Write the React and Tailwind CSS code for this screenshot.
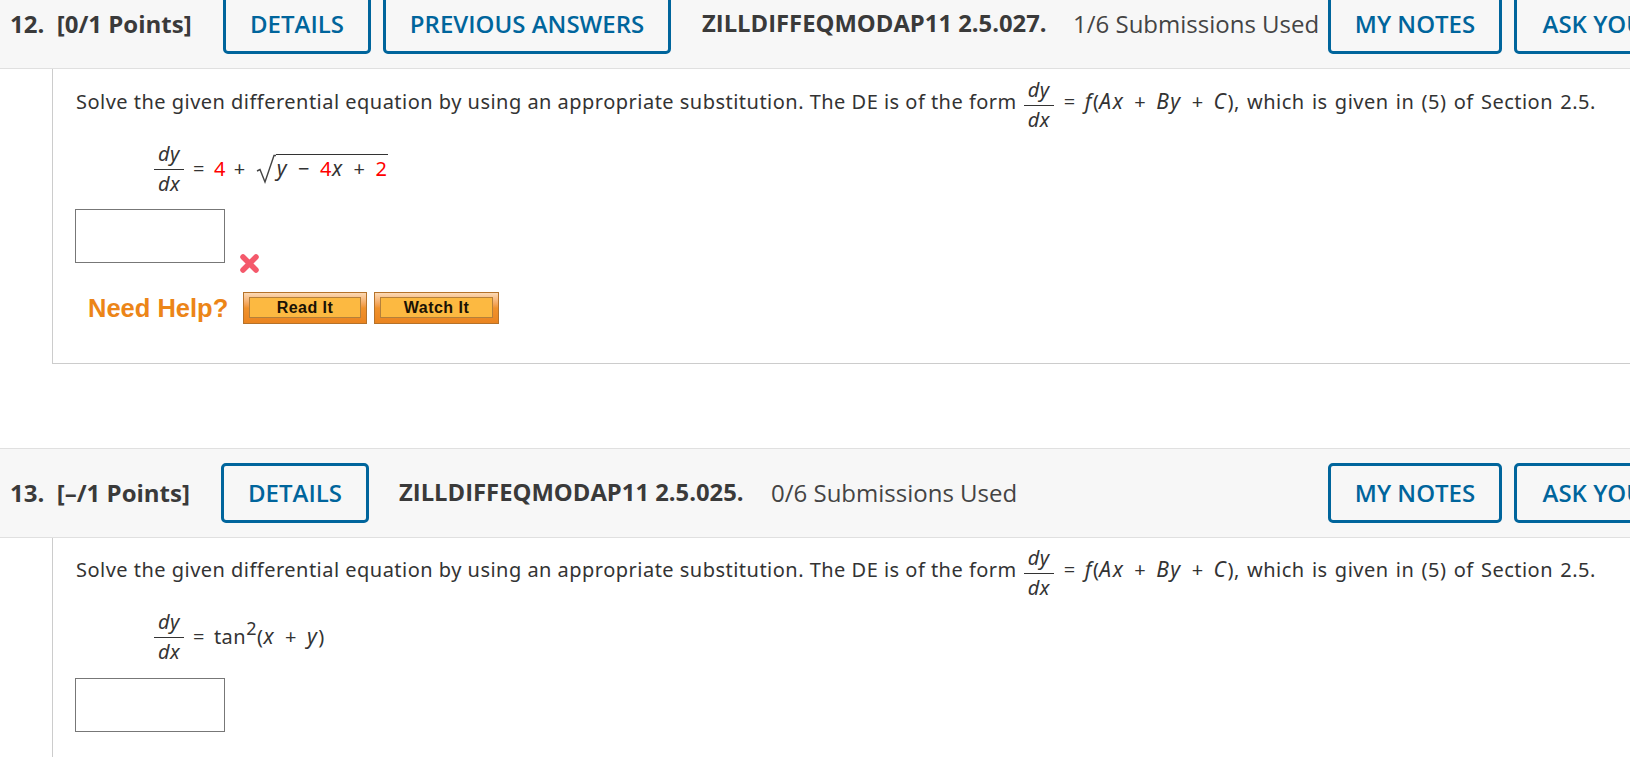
import React from 'react';

const Frac = () => (
    <span className="inline-flex flex-col items-center align-middle italic leading-[28px] w-[30px] shrink-0">
        <span className="w-full text-center border-b border-[#333] pb-[1px]">dy</span>
        <span className="w-full text-center">dx</span>
    </span>
);

const Op = ({ children }) => <span className="mx-[10px]">{children}</span>;

const V = ({ children }) => <i className="text-[21px] tracking-[1.5px]">{children}</i>;

const HeaderButton = ({ label, className }) => (
    <button className={`h-[60px] border-[3px] border-[#00659c] rounded-[5px] text-[#00659c] text-[24px] font-semibold shrink-0 ${className}`}>
        {label}
    </button>
);

const Prompt = () => (
    <div className="flex items-center h-[60px] whitespace-nowrap">
        <span>Solve the given differential equation by using an appropriate substitution. The DE is of the form</span>
        <span className="ml-[7px] mr-[10px] mt-[5px] flex"><Frac /></span>
        <span className="[word-spacing:1.6px]">
            =<span className="ml-[9px]"><V>f</V></span>(<V>Ax</V><Op>+</Op><V>By</V><Op>+</Op><V>C</V>), which is given in (5) of Section 2.5.
        </span>
    </div>
);

const HelpButton = ({ label, className }) => (
    <button className={`h-[32px] border border-[#b5722a] bg-gradient-to-b from-[#fbd9b4] via-[#f0922c] to-[#ea8420] px-[5px] pt-[4px] pb-[5px] flex ${className}`}>
        <span className="flex-1 h-full flex items-center justify-center pt-[1px] bg-[#fcb941] border border-[#b5803a] text-[16px] font-bold text-[#1a1205] font-['Liberation_Sans',Arial,sans-serif]">{label}</span>
    </button>
);

const App = () => (
    <div className="w-[1630px] h-[757px] overflow-hidden bg-white text-[#333] font-['Noto_Sans',sans-serif]">
        {/* Question 12 */}
        <div className="-mt-[22px] h-[91px] bg-[#f7f7f7] border-b border-[#e0e0e0] flex items-center pt-[2px] whitespace-nowrap font-['Open_Sans',sans-serif] text-[24px] overflow-hidden">
            <span className="ml-[10px] w-[213px] shrink-0 font-bold text-[#3a3a3a] text-[24px]">12.&nbsp; [0/1 Points]</span>
            <HeaderButton label="DETAILS" className="w-[148px]" />
            <HeaderButton label="PREVIOUS ANSWERS" className="w-[288px] ml-[12px]" />
            <span className="ml-[31px] w-[371px] shrink-0 font-bold text-[#3a3a3a] text-[23.8px]">ZILLDIFFEQMODAP11 2.5.027.</span>
            <span className="w-[255px] shrink-0 text-[#444]">1/6 Submissions Used</span>
            <HeaderButton label="MY NOTES" className="w-[174px]" />
            <HeaderButton label="ASK YOUR TEACHER" className="w-[285px] ml-[12px] shrink-0" />
        </div>
        <div className="ml-[52px] h-[295px] border-l border-b border-[#ccc] pl-[23px] pt-[3px] text-[20px] tracking-[0.48px]">
            <Prompt />
            <div className="flex items-center h-[60px] ml-[78px] mt-[7px] whitespace-nowrap">
                <Frac />
                <span className="ml-[9px]">=</span>
                <span className="ml-[9px] text-[#f00]">4</span>
                <span className="ml-[8px]">+</span>
                <svg className="ml-[10px]" width="20" height="30" viewBox="0 0 20 30">
                    <path d="M1 17 L4 15.5 L9 28 L18 1.5 L20 1.5" fill="none" stroke="#444" strokeWidth="1.4" />
                </svg>
                <span className="border-t border-[#333] leading-[27px] mb-[1px] -mt-[2px] pl-[1px] pr-[1px]">
                    <V>y</V><Op>−</Op><span className="text-[#f00]">4</span><V>x</V><Op>+</Op><span className="text-[#f00]">2</span>
                </span>
            </div>
            <div className="flex mt-[10px] -ml-[1px]">
                <input className="w-[150px] h-[54px] border border-[#777] bg-white" />
                <svg className="ml-[14px] mt-[44px]" width="21" height="21" viewBox="0 0 21 21">
                    <path d="M4 4 L17 17 M17 4 L4 17" stroke="#f4596b" strokeWidth="5.5" strokeLinecap="round" />
                </svg>
            </div>
            <div className="flex items-center mt-[15px] ml-[12px]">
                <span className="w-[155px] text-[25.5px] tracking-normal font-bold text-[#ec8518] font-['Liberation_Sans',Arial,sans-serif]">Need Help?</span>
                <HelpButton label="Read It" className="w-[124px]" />
                <HelpButton label="Watch It" className="w-[125px] ml-[7px]" />
            </div>
        </div>

        {/* Question 13 */}
        <div className="mt-[84px] h-[90px] bg-[#f7f7f7] border-y border-[#e0e0e0] flex items-center whitespace-nowrap font-['Open_Sans',sans-serif] text-[24px] overflow-hidden">
            <span className="ml-[10px] w-[211px] shrink-0 font-bold text-[#3a3a3a] text-[24px]">13.&nbsp; [–/1 Points]</span>
            <HeaderButton label="DETAILS" className="w-[148px]" />
            <span className="ml-[30px] w-[372px] shrink-0 font-bold text-[#3a3a3a] text-[23.8px]">ZILLDIFFEQMODAP11 2.5.025.</span>
            <span className="w-[557px] shrink-0 text-[#444]">0/6 Submissions Used</span>
            <HeaderButton label="MY NOTES" className="w-[174px]" />
            <HeaderButton label="ASK YOUR TEACHER" className="w-[285px] ml-[12px]" />
        </div>
        <div className="ml-[52px] h-[300px] border-l border-[#ccc] pl-[23px] pt-[2px] text-[20px] tracking-[0.48px]">
            <Prompt />
            <div className="flex items-center h-[60px] ml-[78px] mt-[7px] whitespace-nowrap">
                <Frac />
                <span className="ml-[9px]">=</span>
                <span className="ml-[9px]">tan<sup className="text-[18px]">2</sup>(<V>x</V><Op>+</Op><V>y</V>)</span>
            </div>
            <input className="block mt-[11px] -ml-[1px] w-[150px] h-[54px] border border-[#777] bg-white" />
        </div>
    </div>
);

export default App;
